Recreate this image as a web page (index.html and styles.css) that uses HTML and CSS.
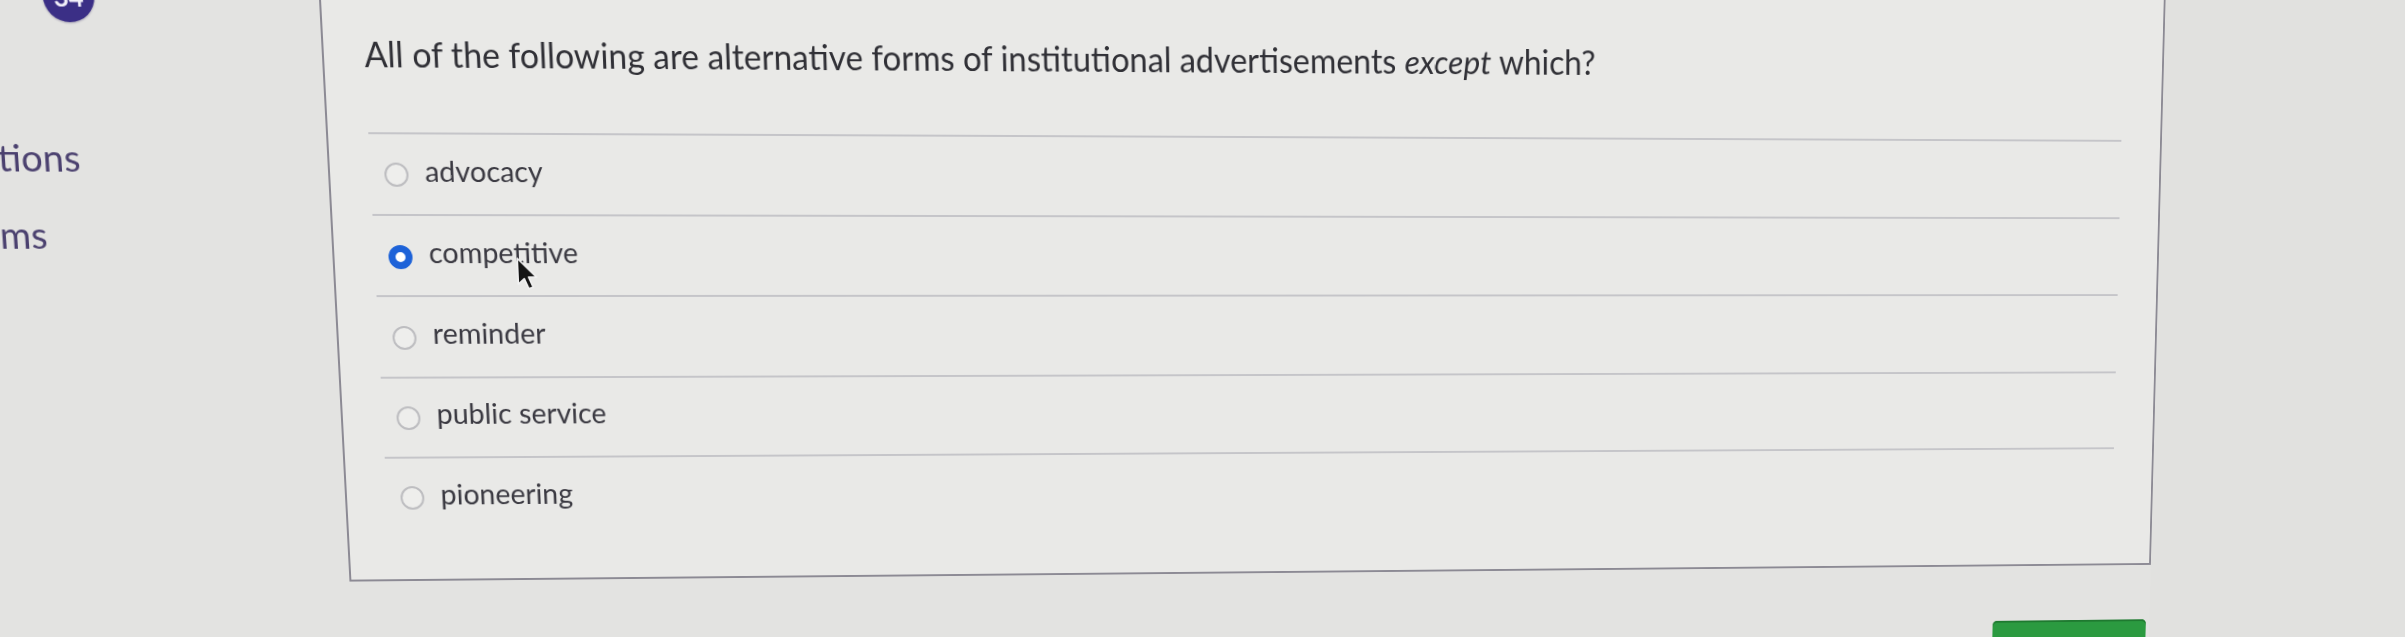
FILE: index.html
```html
<!DOCTYPE html>
<html lang="en">
<head>
<meta charset="utf-8">
<title>Quiz question</title>
<link rel="stylesheet" href="styles.css">
</head>
<body>
<div class="page">
  <div class="frame">
    <aside class="sidebar">
      <div class="badge">34</div>
      <div class="nav-label nav-first">tions</div>
      <div class="nav-label nav-second">ms</div>
    </aside>
    <main class="main">
      <section class="card">
        <div class="question">All of the following are alternative forms of institutional advertisements <em>except</em> which?</div>
        <div class="options">
          <div class="option"><span class="radio"></span><span class="label">advocacy</span></div>
          <div class="option option-selected"><span class="radio radio-on"></span><span class="label">competitive</span>
            <svg class="cursor" width="22" height="34" viewBox="0 0 22 34"><path d="M1.2 1.2 L1.2 27.2 L7.4 21.6 L11.8 31.8 L16 30 L11.8 20.1 L19.9 20.1 Z" fill="#141414" stroke="#f2f2f2" stroke-width="1.6" stroke-linejoin="round"/></svg>
          </div>
          <div class="option"><span class="radio"></span><span class="label">reminder</span></div>
          <div class="option"><span class="radio"></span><span class="label">public service</span></div>
          <div class="option option-last"><span class="radio"></span><span class="label">pioneering</span></div>
        </div>
      </section>
      <div class="footer"><button class="next-btn" type="button" aria-label="Next"></button></div>
    </main>
    <div class="rightpad"></div>
  </div>
</div>
</body>
</html>
```
FILE: styles.css
```css
html, body {
  margin: 0;
  padding: 0;
  width: 2405px;
  height: 637px;
  overflow: hidden;
  background: #e3e3e1;
}

.page {
  margin: -60px 0 0 -60px;
  padding: 60px 0 0 60px;
  width: 2700px;
  height: 820px;
  background: #e3e3e1;
  transform-origin: 60px 60px;
  transform: matrix3d(1.034874, 0.0086159, 0, 0.000031172, 0.068291, 1.036211, 0, 0.000044021, 0, 0, 1, 0, -15.239, -5.499, 0, 1);
  font-family: Lato, "Open Sans", "Liberation Sans", sans-serif;
}

.frame {
  display: flex;
  align-items: flex-start;
  width: 2640px;
  height: 760px;
}

.sidebar {
  position: relative;
  flex: none;
  width: 326px;
  height: 760px;
  padding-top: 136px;
  box-sizing: border-box;
}

.badge {
  position: absolute;
  left: 56px;
  top: -24px;
  width: 50px;
  height: 50px;
  border-radius: 50%;
  background: #3b2f86;
  box-shadow: 0 1px 2px rgba(40, 30, 90, 0.35);
  color: #f2f0fa;
  font-size: 25px;
  font-weight: 700;
  line-height: 50px;
  text-align: center;
}

.nav-label {
  font-size: 37px;
  line-height: 44px;
  color: #4b416f;
}

.nav-first {
  margin-left: 2px;
}

.nav-second {
  margin-top: 31.7px;
  margin-left: -1px;
}

.main {
  flex: none;
  width: 1928px;
  margin-top: -20px;
}

.card {
  border: 2px solid #8c8a94;
  background: #e9e9e7;
  padding: 53px 43px 43.75px 40px;
}

.question {
  font-size: 33.8px;
  line-height: 40px;
  color: #303036;
  padding-bottom: 57px;
  border-bottom: 2px solid #c5c5c9;
}

.question em {
  font-style: italic;
}

.option {
  position: relative;
  display: flex;
  align-items: flex-start;
  padding: 18.6px 0 26.05px 13.5px;
  border-bottom: 2px solid #c5c5c9;
}

.option-last {
  border-bottom: none;
}

.radio {
  flex: none;
  width: 24px;
  height: 24px;
  box-sizing: border-box;
  margin-top: 9.8px;
  margin-right: 17px;
  border-radius: 50%;
  border: 2px solid #bdbdc0;
  background: #eeeeec;
}

.radio-on {
  border: 7.5px solid #1d62d8;
  background: #ffffff;
}

.label {
  font-size: 28.9px;
  line-height: 34.6px;
  color: #3b3a42;
}

.cursor {
  position: absolute;
  left: 142px;
  top: 41px;
}

.footer {
  display: flex;
  justify-content: flex-end;
  margin-top: 59px;
  padding-right: 4px;
}

.next-btn {
  width: 173px;
  height: 50px;
  border: none;
  border-radius: 5px;
  background: #2b9a40;
  box-shadow: inset 0 2px 0 #1f7a30;
}

.rightpad {
  flex: 1;
  margin-top: -60px;
  height: 820px;
  background: #e1e1df;
}
```
